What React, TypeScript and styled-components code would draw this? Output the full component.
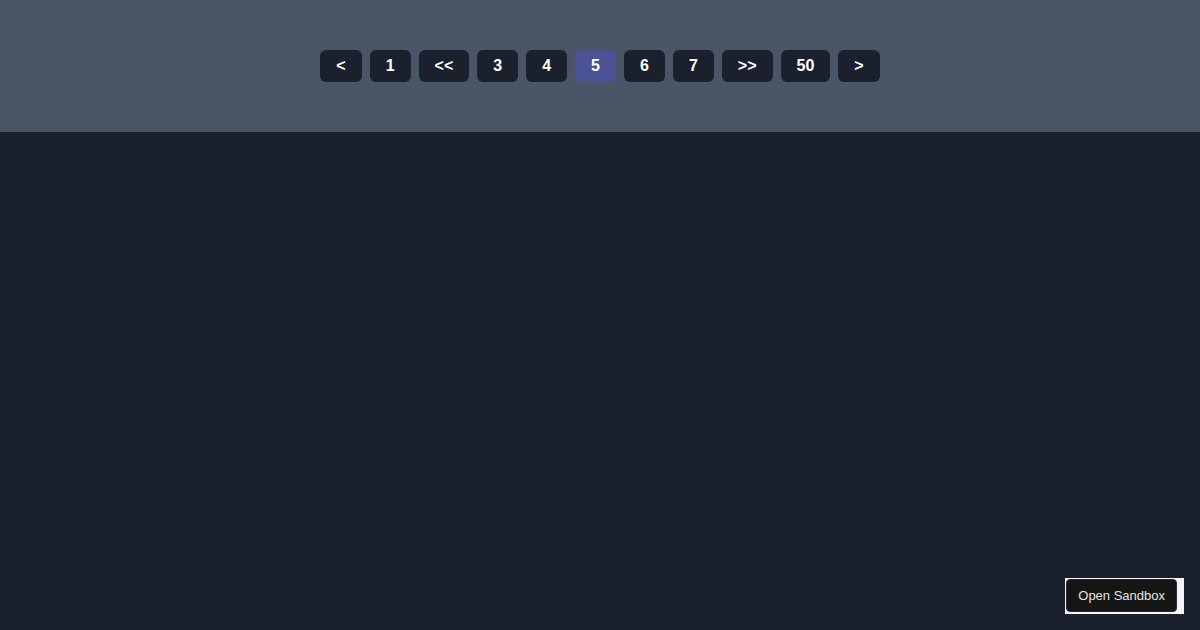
import React, { useState } from "react";
import styled, { createGlobalStyle } from "styled-components";

const GlobalStyle = createGlobalStyle`
  html, body {
    margin: 0;
    padding: 0;
    background-color: #1a202c;
    font-family: "Liberation Sans", Arial, sans-serif;
  }
`;

const Page = styled.div`
  min-height: 100vh;
  background-color: #1a202c;
`;

const Header = styled.div`
  background-color: #4a5568;
  padding: 50px 0;
  display: flex;
  justify-content: center;
`;

const Pager = styled.nav`
  display: flex;
  gap: 8px;
`;

const PageButton = styled.button<{ $active?: boolean }>`
  font-family: "Liberation Sans", Arial, sans-serif;
  font-size: 16px;
  font-weight: 700;
  line-height: 16px;
  padding: 8px 16px;
  border: none;
  border-radius: 6px;
  color: #ffffff;
  background-color: ${(p) => (p.$active ? "#4c5296" : "#1a202c")};
  cursor: pointer;
`;

const SandboxWrap = styled.div`
  position: fixed;
  right: 16px;
  bottom: 16px;
  background: #f4f5fa;
  padding: 1px 7px 2px 1px;
`;

const SandboxButton = styled.button`
  font-family: "Liberation Sans", Arial, sans-serif;
  font-size: 13px;
  color: #e6e6e6;
  background: #151515;
  border: 1px solid #2c2c2c;
  border-radius: 4px;
  height: 33px;
  padding: 0 11px;
`;

const items: { label: string; page: number }[] = [
  { label: "<", page: 4 },
  { label: "1", page: 1 },
  { label: "<<", page: 2 },
  { label: "3", page: 3 },
  { label: "4", page: 4 },
  { label: "5", page: 5 },
  { label: "6", page: 6 },
  { label: "7", page: 7 },
  { label: ">>", page: 8 },
  { label: "50", page: 50 },
  { label: ">", page: 6 },
];

const App = () => {
  const [current, setCurrent] = useState<number>(5);

  return (
    <Page>
      <GlobalStyle />
      <Header>
        <Pager>
          {items.map((item, i) => (
            <PageButton
              key={i}
              $active={item.label === String(current)}
              onClick={() => setCurrent(item.page)}
            >
              {item.label}
            </PageButton>
          ))}
        </Pager>
      </Header>
      <SandboxWrap>
        <SandboxButton>Open Sandbox</SandboxButton>
      </SandboxWrap>
    </Page>
  );
};

export default App;
